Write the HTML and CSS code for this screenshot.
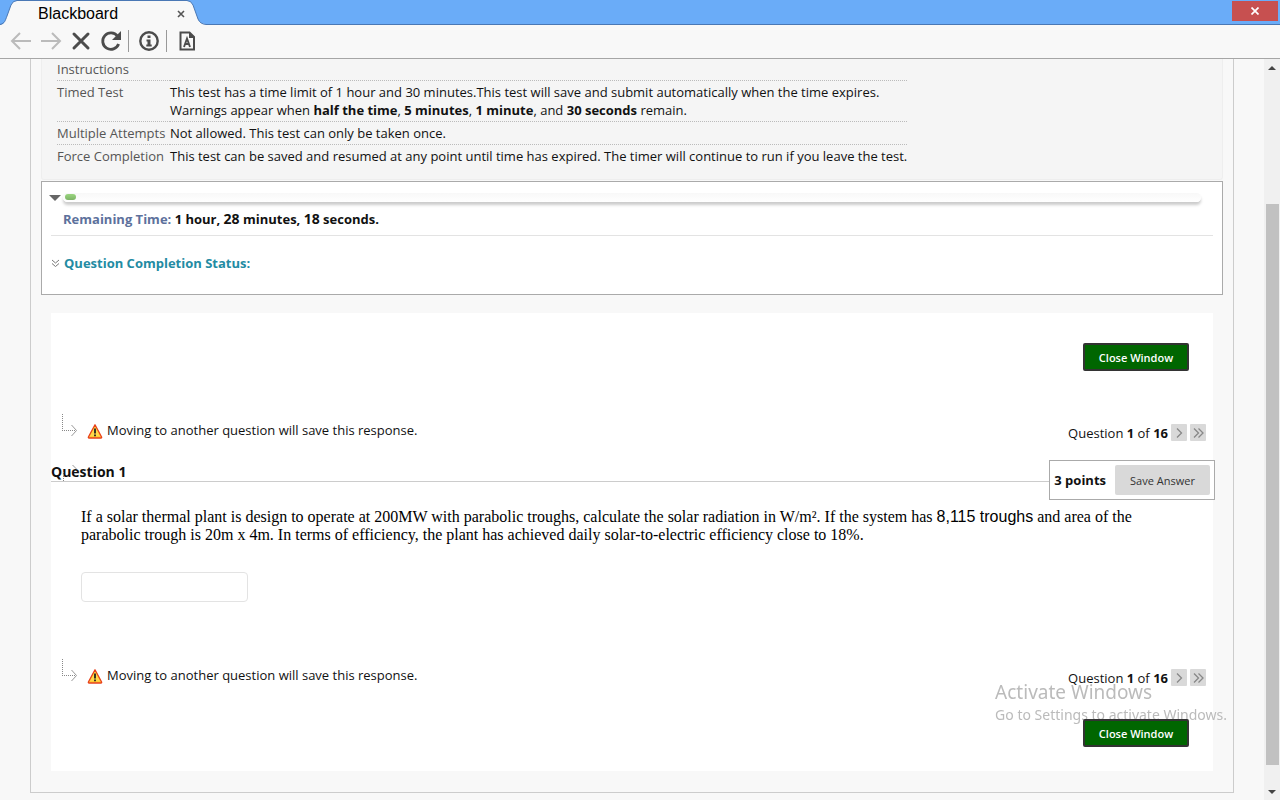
FILE: index.html
```
<!DOCTYPE html>
<html lang="en">
<head>
  <meta charset="UTF-8">
  <meta name="viewport" content="width=device-width, initial-scale=1.0">
  <title>Blackboard</title>
  <link rel="stylesheet" href="styles.css">
</head>
<body>
  <svg class="sprite" aria-hidden="true">
    <symbol id="elbow" viewBox="0 0 18 24">
      <path d="M1.5 1v17M3 17.5h12" fill="none" stroke="#888" stroke-dasharray="1 1"/>
      <path d="M10.500 12l5 5.500-5 5.500" fill="none" stroke="#999"/>
    </symbol>
    <symbol id="warning" viewBox="0 0 16 16">
      <path d="M8 1.800L14.600 14a.7.7 0 0 1-.6 1H2a.7.7 0 0 1-.6-1z" fill="#fc3" stroke="#e8401c" stroke-width="1.300" stroke-linejoin="round"/>
      <path d="M8 4L12.800 13H3.200z" fill="#ffd84a"/>
      <path d="M8 5.500v5M8 11.500v1.800" stroke="#222" stroke-width="1.800"/>
    </symbol>
    <symbol id="next" viewBox="0 0 16 17">
      <path d="M6 4.500l4.500 4.500L6 13.500" fill="none" stroke="#888" stroke-width="1.300"/>
    </symbol>
    <symbol id="last" viewBox="0 0 16 17">
      <path d="M4 4.500l4.500 4.500L4 13.500M8.500 4.500L13 9l-4.500 4.500" fill="none" stroke="#888" stroke-width="1.300"/>
    </symbol>
  </svg>

  <header class="titlebar">
    <div class="tab">
      <svg class="tab-shape" width="206" height="25" viewBox="0 0 206 25">
        <path d="M0 25C5 24 5 21 7 16L11 5Q13 1 17 1H187Q191 1 193 5L198 19Q200 24 206 24V25z" fill="#f8f8f8"/>
        <path d="M0 24.500C5 23 5 21 7 16L11 5Q13 .5 17 .5H187Q191 .5 193 5L198 19Q200 24 206 24.500" fill="none" stroke="#4a78b5"/>
      </svg>
      <span class="tab-title">Blackboard</span>
      <button class="tab-close" aria-label="Close tab">
        <svg width="8" height="8" viewBox="0 0 8 8"><path d="M1 1l6 6M7 1L1 7" stroke="#555" stroke-width="1.600"/></svg>
      </button>
    </div>
    <button class="win-close" aria-label="Close">
      <svg width="8" height="8" viewBox="0 0 8 8"><path d="M.5 .5l7 7M7.500 .5l-7 7" stroke="#fff" stroke-width="1.700"/></svg>
    </button>
  </header>

  <nav class="toolbar">
    <button aria-label="Back">
      <svg width="22" height="22" viewBox="0 0 22 22"><path d="M21 11H2.500M10 3L2 11l8 8" fill="none" stroke="#bbb" stroke-width="2"/></svg>
    </button>
    <button aria-label="Forward">
      <svg width="22" height="22" viewBox="0 0 22 22"><path d="M1 11h18.500M12 3l8 8-8 8" fill="none" stroke="#bbb" stroke-width="2"/></svg>
    </button>
    <button aria-label="Stop">
      <svg width="22" height="22" viewBox="0 0 22 22"><path d="M4 4l14 14M18 4L4 18" stroke="#4c4c4c" stroke-width="3" stroke-linecap="round"/></svg>
    </button>
    <button aria-label="Reload">
      <svg width="22" height="22" viewBox="0 0 22 22"><path d="M17.500 6.200A8.200 8.200 0 1 0 18.600 14" fill="none" stroke="#4c4c4c" stroke-width="2.800"/><path d="M21 1v9h-9z" fill="#4c4c4c"/></svg>
    </button>
    <span class="divider"></span>
    <button aria-label="Page information">
      <svg width="22" height="22" viewBox="0 0 22 22"><circle cx="11" cy="11" r="8.700" fill="none" stroke="#4c4c4c" stroke-width="2.400"/><path d="M9.500 5.500h3v2.600h-3zM8.500 9.500h4v5h1.200V16.500H8.300v-2h1.200v-3h-1z" fill="#4c4c4c"/></svg>
    </button>
    <span class="divider"></span>
    <button aria-label="Font size">
      <svg width="22" height="22" viewBox="0 0 22 22"><path d="M4.500 2.500h9l4.500 4.500v12.500H4.500z" fill="none" stroke="#4c4c4c" stroke-width="2"/><path d="M13 2v6h6z" fill="#4c4c4c"/><path d="M8 17l3-8.500 3 8.500M9 14h4" fill="none" stroke="#4c4c4c" stroke-width="1.900"/></svg>
    </button>
  </nav>

  <div class="viewport">
    <main class="page">
      <div class="panel">
        <section class="info">
          <table class="info-table">
            <tr><th>Instructions</th><td></td></tr>
            <tr><th>Timed Test</th><td>This test has a time limit of 1 hour and 30 minutes.This test will save and submit automatically when the time expires.<br>Warnings appear when <b>half the time</b>, <b>5 minutes</b>, <b>1 minute</b>, and <b>30 seconds</b> remain.</td></tr>
            <tr><th>Multiple Attempts</th><td>Not allowed. This test can only be taken once.</td></tr>
            <tr><th>Force Completion</th><td>This test can be saved and resumed at any point until time has expired. The timer will continue to run if you leave the test.</td></tr>
          </table>
        </section>

        <section class="status">
          <div class="timer">
            <button class="toggle" aria-label="Collapse timer"></button>
            <div class="bar"><div class="bar-fill"></div></div>
          </div>
          <p class="remaining"><span class="label">Remaining Time:</span> 1 hour, <span class="big">28</span> minutes, <span class="big">18</span> seconds.</p>
          <a class="completion" href="#">
            <svg width="9" height="9" viewBox="0 0 9 9"><path d="M1 1l3.500 3L8 1M1 4.500l3.500 3L8 4.500" fill="none" stroke="#777"/></svg>
            Question Completion Status:
          </a>
        </section>

        <section class="content">
          <div class="actions"><button class="close-window">Close Window</button></div>

          <div class="move">
            <svg class="elbow" width="18" height="24"><use href="#elbow"/></svg>
            <svg class="warning" width="16" height="16"><use href="#warning"/></svg>
            <span class="move-text">Moving to another question will save this response.</span>
            <div class="pager">
              <span>Question <b>1</b> of <b>16</b></span>
              <button aria-label="Next question"><svg width="16" height="17"><use href="#next"/></svg></button>
              <button aria-label="Last question"><svg width="16" height="17"><use href="#last"/></svg></button>
            </div>
          </div>

          <div class="question-head">
            <h3>Question 1</h3>
            <svg class="stray" width="18" height="18" viewBox="0 0 18 18"><path d="M1.500 8v10" stroke="#888" stroke-dasharray="1 1"/><path d="M10.500 1l4 4" stroke="#999"/></svg>
            <div class="points">
              <b>3 points</b>
              <button class="save">Save Answer</button>
            </div>
          </div>

          <div class="question-body">
            <p id="question">If a solar thermal plant is design to operate at 200MW with parabolic troughs, calculate the solar radiation in W/m². If the system has <span class="sans">8,115 troughs</span> and area of the parabolic trough is 20m x 4m. In terms of efficiency, the plant has achieved daily solar-to-electric efficiency close to 18%.</p>
            <input type="text" class="answer" aria-labelledby="question">
          </div>

          <div class="move">
            <svg class="elbow" width="18" height="24"><use href="#elbow"/></svg>
            <svg class="warning" width="16" height="16"><use href="#warning"/></svg>
            <span class="move-text">Moving to another question will save this response.</span>
            <div class="pager">
              <span>Question <b>1</b> of <b>16</b></span>
              <button aria-label="Next question"><svg width="16" height="17"><use href="#next"/></svg></button>
              <button aria-label="Last question"><svg width="16" height="17"><use href="#last"/></svg></button>
            </div>
          </div>

          <div class="actions bottom"><button class="close-window">Close Window</button></div>
        </section>
      </div>
    </main>

    <div class="scrollbar">
      <span class="arrow up"></span>
      <span class="track-top"></span>
      <span class="thumb"></span>
      <span class="track-bottom"></span>
      <span class="arrow down"></span>
    </div>
  </div>

  <div class="watermark">
    <div class="watermark-title">Activate Windows</div>
    <div>Go to Settings to activate Windows.</div>
  </div>
</body>
</html>
```
FILE: styles.css
```
* {
  margin: 0;
  padding: 0;
  box-sizing: border-box;
}

body {
  height: 100vh;
  display: flex;
  flex-direction: column;
  overflow: hidden;
  background: #f8f8f8;
  color: #111;
  font: 13px/18px "Open Sans", sans-serif;
}

button {
  border: none;
  background: none;
  font-family: inherit;
  cursor: pointer;
}

svg {
  display: block;
  flex-shrink: 0;
}

.sprite {
  position: absolute;
  width: 0;
  height: 0;
}

/* Browser window */
.titlebar {
  display: flex;
  justify-content: space-between;
  align-items: flex-start;
  height: 25px;
  background: #6aacf8;
  box-shadow: inset 0 -1px #4a78b5;
}

.tab {
  position: relative;
  display: flex;
  align-items: center;
  justify-content: space-between;
  width: 206px;
  height: 25px;
  padding: 2px 21px 0 38px;
}

.tab-shape {
  position: absolute;
  left: 0;
  top: 0;
}

.tab-title {
  position: relative;
  color: #000;
  font: 16px/20px "Liberation Sans", sans-serif;
}

.tab-close {
  position: relative;
}

.win-close {
  display: flex;
  align-items: center;
  justify-content: center;
  width: 46px;
  height: 20px;
  margin: 1px 2px 0 0;
  background: #c75050;
}

.toolbar {
  display: flex;
  align-items: center;
  gap: 8px;
  height: 34px;
  padding: 0 10px 2px;
  border-bottom: 1px solid #a6a6a6;
}

.divider {
  width: 1px;
  height: 22px;
  margin: 0 1px 0 -2px;
  background: #999;
}

.viewport {
  display: flex;
  flex: 1;
  min-height: 0;
}

.page {
  flex: 1;
  padding: 0 30px;
  overflow: hidden;
}

.panel {
  padding: 0 10px 21px;
  border: 1px solid #ccc;
  border-top: none;
}

/* Test information */
.info {
  padding: 0 15px 12px;
  border: 1px solid #eee;
  border-top: none;
  border-radius: 0 0 3px 3px;
  background: #f5f5f5;
}

.info-table {
  border-collapse: separate;
  border-spacing: 0;
  white-space: nowrap;
}

.info-table th,
.info-table td {
  padding: 2px 0;
  border-bottom: 1px dotted #bbb;
  vertical-align: top;
  text-align: left;
}

.info-table th {
  width: 113px;
  color: #555;
  font-weight: normal;
}

.info-table tr:first-child th,
.info-table tr:first-child td {
  padding-top: 1px;
}

.info-table tr:last-child th,
.info-table tr:last-child td {
  border-bottom: none;
}

.status {
  margin-top: 1px;
  padding: 11px 9px 22px;
  border: 1px solid #aaa;
  background: #fff;
}

.timer {
  display: flex;
  align-items: center;
  gap: 2px;
  margin: 0 12px 0 -2px;
}

.toggle {
  border: 6px solid transparent;
  border-top-color: #666;
  border-bottom: none;
}

.bar {
  flex: 1;
  height: 9px;
  padding: 1px 2px;
  border-radius: 5px;
  background: linear-gradient(#f8f8f8, #fff);
  box-shadow: 0 3px 3px #ccc;
}

.bar-fill {
  width: 11px;
  height: 6px;
  border-radius: 3px;
  background: linear-gradient(#9ad67f, #7eb368);
}

.remaining {
  padding: 8px 12px 7px;
  border-bottom: 1px solid #e3e3e3;
  font-weight: 700;
  line-height: 18px;
}

.remaining .label {
  color: #5d719c;
}

.remaining .big {
  font-size: 14px;
}

.completion {
  display: flex;
  align-items: center;
  gap: 4px;
  margin-top: 18px;
  color: #238ba3;
  font-weight: 700;
  text-decoration: none;
}

/* Question area */
.content {
  margin: 18px 10px 0;
  padding: 30px 0 24px;
  background: #fff;
}

.actions {
  display: flex;
  justify-content: flex-end;
  padding-right: 24px;
}

.close-window {
  position: relative;
  z-index: 2;
  width: 106px;
  height: 28px;
  border: 2px solid #333;
  border-radius: 2px;
  background: #060;
  color: #fff;
  font-size: 11px;
  font-weight: 600;
}

.move {
  display: flex;
  align-items: center;
  height: 24px;
  margin-top: 42px;
  padding: 0 7px 0 10px;
}

.warning {
  margin: 12px 4px 0 8px;
}

.move-text {
  margin-top: 10px;
}

.pager {
  display: flex;
  align-items: center;
  gap: 3px;
  margin: 15px 0 0 auto;
}

.pager button {
  border-radius: 1px;
  background: #d9d9d9;
}

.question-head {
  position: relative;
  display: flex;
  align-items: center;
  justify-content: space-between;
  margin: 23px -2px 0 0;
}

/* rule runs under the title up to the points box */
.question-head::before {
  content: "";
  position: absolute;
  left: 0;
  right: 2px;
  top: 21px;
  border-top: 1px solid #ccc;
}

.question-head h3 {
  margin-bottom: 17px;
  font-size: 14px;
  font-weight: 700;
}

.stray {
  position: absolute;
  left: 11px;
  top: 4px;
}

.points {
  position: relative;
  display: flex;
  align-items: center;
  gap: 9px;
  height: 40px;
  padding: 4px;
  border: 1px solid #aaa;
  background: #fff;
}

.save {
  width: 95px;
  height: 30px;
  border-radius: 2px;
  background: #d9d9d9;
  color: #333;
  font-size: 11px;
}

.question-body {
  padding: 8px 60px 0 30px;
  color: #000;
  font-family: "Liberation Serif", serif;
  font-size: 16px;
}

.sans {
  font: 16px/16px "Liberation Sans", sans-serif;
}

.answer {
  display: block;
  width: 167px;
  height: 30px;
  margin-top: 28px;
  padding: 0 8px;
  border: 1px solid #e3e3e3;
  border-radius: 4px;
}

.question-body + .move {
  margin-top: 56px;
}

.bottom {
  margin-top: 37px;
}

.scrollbar {
  display: flex;
  flex-direction: column;
  align-items: center;
  width: 16px;
  padding: 7px 0 6px;
  background: #f0f0f0;
}

.arrow {
  border: 4px solid transparent;
}

.arrow.up {
  border-top: none;
  border-bottom-color: #444;
}

.arrow.down {
  border-bottom: none;
  border-top-color: #444;
}

.track-top {
  flex: 134;
}

.thumb {
  flex: 561;
  width: 13px;
  background: #c1c1c1;
}

.track-bottom {
  flex: 25;
}

.watermark {
  position: fixed;
  right: 53px;
  bottom: 75px;
  z-index: 1;
  color: #bbb;
  font-family: "Noto Sans", sans-serif;
  font-size: 14px;
  line-height: 20px;
  pointer-events: none;
}

.watermark-title {
  font-size: 19px;
  line-height: 26px;
}
```
